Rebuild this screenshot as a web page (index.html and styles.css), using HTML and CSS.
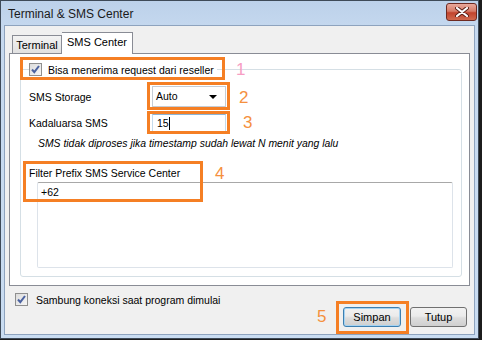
FILE: index.html
```html
<!DOCTYPE html>
<html lang="id">
<head>
    <meta charset="UTF-8">
    <title>Terminal &amp; SMS Center</title>
    <link rel="stylesheet" href="styles.css">
</head>
<body>

    <div class="window">
        <!-- Title bar -->
        <div class="titlebar">
            <span class="title">Terminal &amp; SMS Center</span>
            <div class="close-btn">
                <svg width="14" height="10" viewBox="0 0 14 10">
                    <path d="M2 1 L12 9 M12 1 L2 9" stroke="#5a2018" stroke-width="4" stroke-linecap="round"/>
                    <path d="M2 1 L12 9 M12 1 L2 9" stroke="#fff" stroke-width="2.2" stroke-linecap="round"/>
                </svg>
            </div>
        </div>

        <div class="client">
            <!-- Tabs -->
            <div class="tabs">
                <div class="tab">Terminal</div>
                <div class="tab active">SMS Center</div>
            </div>

            <div class="panel">
                <div class="group">
                    <label class="legend">
                        <span class="check">
                            <svg width="13" height="13" viewBox="0 0 13 13"><path d="M3 6.5 L5.3 9.2 L10 3" fill="none" stroke="#4b62a0" stroke-width="2"/></svg>
                        </span>
                        Bisa menerima request dari reseller
                    </label>

                    <div class="row first">
                        <span class="label">SMS Storage</span>
                        <div class="combo">Auto<span class="arrow"></span></div>
                    </div>

                    <div class="row second">
                        <span class="label">Kadaluarsa SMS</span>
                        <div class="textbox">15<span class="caret"></span></div>
                    </div>

                    <p class="note">SMS tidak diproses jika timestamp sudah lewat N menit yang lalu</p>

                    <p class="field-label">Filter Prefix SMS Service Center</p>
                    <div class="textarea">+62</div>
                </div>
            </div>

            <!-- Bottom -->
            <div class="footer">
                <label class="auto-connect">
                    <span class="check">
                        <svg width="13" height="13" viewBox="0 0 13 13"><path d="M3 6.5 L5.3 9.2 L10 3" fill="none" stroke="#4b62a0" stroke-width="2"/></svg>
                    </span>
                    Sambung koneksi saat program dimulai
                </label>
                <div class="buttons">
                    <button class="btn default">Simpan</button>
                    <button class="btn">Tutup</button>
                </div>
            </div>
        </div>

        <!-- Annotation marks -->
        <div class="mark box1"></div>
        <div class="mark box2"></div>
        <div class="mark box3"></div>
        <div class="mark box4"></div>
        <div class="mark box5"></div>
        <span class="num num1">1</span>
        <span class="num num2">2</span>
        <span class="num num3">3</span>
        <span class="num num4">4</span>
        <span class="num num5">5</span>
    </div>

</body>
</html>
```

FILE: styles.css
```css
/* General */
body {
    margin: 0;
    background-color: #1c1c1c;
    font-family: "Liberation Sans", Arial, sans-serif;
    font-size: 10.5px;
    color: #000;
}

p {
    margin: 0;
}

/* Window frame */
.window {
    position: relative;
    width: 477px;
    height: 337px;
    border: 1px solid #3e4a58;
    background: linear-gradient(#bcd1ea, #c6d9ef 30px, #c9dcf1);
}

.titlebar {
    height: 24px;
    display: flex;
    align-items: center;
    justify-content: space-between;
}

.title {
    font-size: 12px;
    color: #1a1a1a;
    padding-left: 7px;
    padding-top: 2px;
}

.close-btn {
    width: 29px;
    height: 16px;
    margin-right: 1px;
    margin-top: -2px;
    border: 1px solid #6e2a21;
    border-radius: 3px;
    background: linear-gradient(#e9a99c, #d67b68 45%, #c2432d 55%, #cf6a4f);
    display: flex;
    align-items: center;
    justify-content: center;
}

.client {
    height: 308px;
    margin: 0 3px;
    border: 1px solid #8ea3be;
    background-color: #f0f0f0;
}

/* Tabs */
.tabs {
    display: flex;
    align-items: flex-end;
    height: 20px;
    margin: 7px 4px 0;
    padding-left: 3px;
}

.tab {
    width: 48px;
    height: 17px;
    border: 1px solid #898c95;
    border-bottom: none;
    background: linear-gradient(#f3f3f3, #e1e1e1);
    text-align: center;
    line-height: 18px;
    font-size: 11px;
}

.tab.active {
    position: relative;
    width: 70px;
    height: 21px;
    margin-bottom: -1px;
    background: #fff;
    line-height: 19px;
    border-left: none;
}

.panel {
    height: 216px;
    margin: 0 4px;
    border: 1px solid #898c95;
    background-color: #fff;
    padding: 15px 7px 0 10px;
}

/* Group box */
.group {
    height: 206px;
    border: 1px solid #d5dfe5;
    border-radius: 3px;
    padding: 0 8px;
}

.legend {
    display: flex;
    align-items: center;
    gap: 6px;
    width: fit-content;
    height: 13px;
    margin-top: -7px;
    padding-right: 3px;
    background-color: #fff;
}

.check {
    width: 11px;
    height: 11px;
    border: 1px solid #8f8f8f;
    background: linear-gradient(135deg, #dcdcdc, #f6f6f6);
    display: flex;
    align-items: center;
    justify-content: center;
}

.check svg {
    flex: none;
}

.row {
    display: flex;
    align-items: center;
}

.row.first {
    margin-top: 10px;
}

.row.second {
    margin-top: 7px;
}

.label {
    width: 123px;
}

.combo {
    position: relative;
    width: 69px;
    height: 19px;
    padding-left: 3px;
    border: 1px solid #c5cdd6;
    background-color: #fff;
    line-height: 19px;
}

.arrow {
    position: absolute;
    right: 8px;
    top: 8px;
    border-left: 4px solid transparent;
    border-right: 4px solid transparent;
    border-top: 4px solid #000;
}

.textbox {
    width: 68px;
    height: 16px;
    padding-left: 4px;
    border: 1px solid #c5dbec;
    border-top-color: #8cb3d4;
    background-color: #fff;
    line-height: 16px;
    display: flex;
    align-items: center;
}

.caret {
    width: 1px;
    height: 13px;
    background-color: #000;
}

.note {
    margin-top: 6px;
    padding-left: 9px;
    font-size: 10.4px;
    font-style: italic;
    line-height: 12px;
}

.field-label {
    margin-top: 17px;
    line-height: 13px;
}

.textarea {
    width: 411px;
    height: 81px;
    margin: 2px 0 0 8px;
    padding: 3px 0 0 3px;
    border: 1px solid #dde3ea;
    border-top-color: #a8a8a8;
    border-radius: 2px;
    background-color: #fff;
}

/* Footer */
.footer {
    padding: 7px 7px 0 10px;
}

.auto-connect {
    display: flex;
    align-items: center;
    gap: 8px;
    height: 13px;
}

.buttons {
    display: flex;
    justify-content: flex-end;
    gap: 9px;
    margin-top: 1px;
}

.btn {
    width: 57px;
    height: 20px;
    padding: 0;
    border: 1px solid #707070;
    border-radius: 3px;
    background: linear-gradient(#f2f2f2, #ebebeb 45%, #dddddd 55%, #cfcfcf);
    font-family: "Liberation Sans", Arial, sans-serif;
    font-size: 11px;
    color: #000;
}

.btn.default {
    width: 58px;
    border-color: #3c7fb1;
    box-shadow: inset 0 0 0 1px #a6d3f2;
}

/* Annotation marks */
.mark {
    position: absolute;
    border: 3px solid #f57f24;
    box-sizing: border-box;
}

.box1 { left: 19px; top: 56px; width: 205px; height: 23px; }
.box2 { left: 146px; top: 81px; width: 83px; height: 28px; }
.box3 { left: 146px; top: 110px; width: 83px; height: 23px; }
.box4 { left: 22px; top: 160px; width: 180px; height: 41px; }
.box5 { left: 335px; top: 300px; width: 73px; height: 33px; }

.num {
    position: absolute;
    font-size: 17px;
    line-height: 17px;
    color: #f5903e;
}

.num1 { left: 235px; top: 60px; color: #f79dc3; }
.num2 { left: 238px; top: 88px; }
.num3 { left: 242px; top: 113px; }
.num4 { left: 214px; top: 164px; }
.num5 { left: 316px; top: 307px; }
```
